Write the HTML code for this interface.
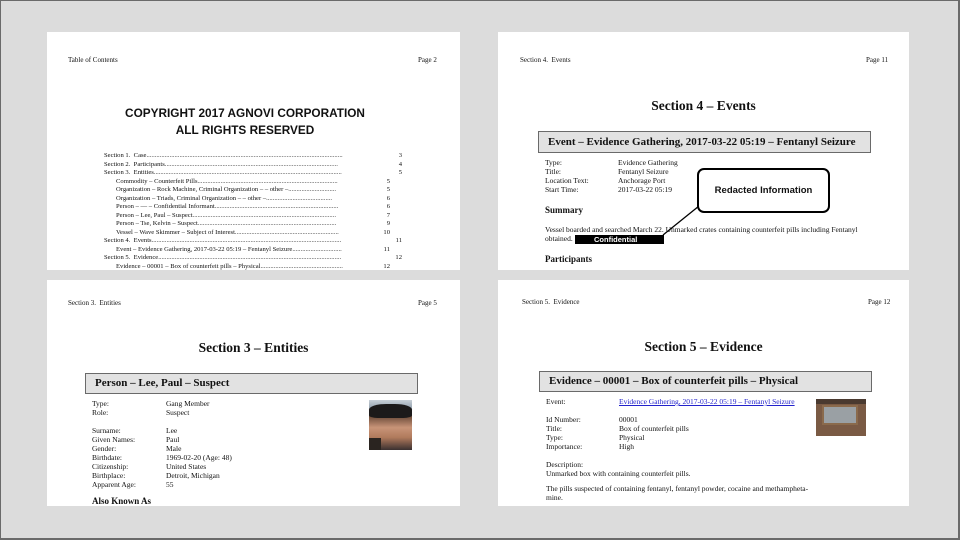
<!DOCTYPE html>
<html><head><meta charset="utf-8"><style>
*{margin:0;padding:0;box-sizing:border-box}
body{width:960px;height:540px;background:#dcdcdc;position:relative;overflow:hidden;font-family:"Liberation Serif",serif;color:#111}
.frame{position:absolute;left:0;top:0;width:960px;height:540px;border:1px solid #6a6a6a;border-right-width:2px;border-bottom-width:2px}
.pg{position:absolute;background:#fff;overflow:hidden}
.t{position:absolute;white-space:nowrap;line-height:10px}
.s{font-size:7px}
.f{font-size:7.5px}
.h{font-weight:bold;font-size:13.5px;line-height:16px}
.box{position:absolute;background:#e2e2e2;border:1px solid #6a6a6a;font-weight:bold;font-size:11px;line-height:19px;padding-left:9px;white-space:nowrap}
.toc{position:absolute;font-size:6.6px;line-height:8.5px;white-space:nowrap;overflow:hidden}
</style></head><body>
<div class="frame"></div>

<!-- TL -->
<div class="pg" style="left:47px;top:32px;width:413px;height:238px">
<div class="t s" style="left:21px;top:23px">Table of Contents</div>
<div class="t s" style="left:371px;top:23px">Page 2</div>
<div class="t" style="left:0;width:396px;text-align:center;top:73px;font-family:'Liberation Sans',sans-serif;font-weight:bold;font-size:11.8px;line-height:17px">COPYRIGHT 2017 AGNOVI CORPORATION<br>ALL RIGHTS RESERVED</div>
<div class="toc" style="left:57px;top:120px;width:298px">
<div>Section 1.&nbsp; Case.......................................................................................................................<span style="float:right">3</span></div>
<div>Section 2.&nbsp; Participants.........................................................................................................<span style="float:right">4</span></div>
<div>Section 3.&nbsp; Entities..................................................................................................................<span style="float:right">5</span></div>
<div style="padding-left:12px;width:286px">Commodity – Counterfeit Pills.....................................................................................<span style="float:right">5</span></div>
<div style="padding-left:12px;width:286px">Organization – Rock Machine, Criminal Organization – – other –.............................<span style="float:right">5</span></div>
<div style="padding-left:12px;width:286px">Organization – Triads, Criminal Organization – – other –........................................<span style="float:right">6</span></div>
<div style="padding-left:12px;width:286px">Person – — – Confidential Informant...........................................................................<span style="float:right">6</span></div>
<div style="padding-left:12px;width:286px">Person – Lee, Paul – Suspect.......................................................................................<span style="float:right">7</span></div>
<div style="padding-left:12px;width:286px">Person – Tse, Kelvin – Suspect....................................................................................<span style="float:right">9</span></div>
<div style="padding-left:12px;width:286px">Vessel – Wave Skimmer – Subject of Interest...............................................................<span style="float:right">10</span></div>
<div>Section 4.&nbsp; Events...................................................................................................................<span style="float:right">11</span></div>
<div style="padding-left:12px;width:286px">Event – Evidence Gathering, 2017-03-22 05:19 – Fentanyl Seizure..............................<span style="float:right">11</span></div>
<div>Section 5.&nbsp; Evidence...............................................................................................................<span style="float:right">12</span></div>
<div style="padding-left:12px;width:286px">Evidence – 00001 – Box of counterfeit pills – Physical..................................................<span style="float:right">12</span></div>
</div>
</div>

<!-- TR -->
<div class="pg" style="left:498px;top:32px;width:411px;height:238px">
<div class="t s" style="left:22px;top:23px">Section 4.&nbsp; Events</div>
<div class="t s" style="left:368px;top:23px">Page 11</div>
<div class="t h" style="left:0;width:411px;text-align:center;top:66px">Section 4 – Events</div>
<div class="box" style="left:40px;top:99px;width:333px;height:22px;line-height:20px">Event – Evidence Gathering, 2017-03-22 05:19 – Fentanyl Seizure</div>
<div class="t f" style="left:47px;top:126px;line-height:9px">Type:<br>Title:<br>Location Text:<br>Start Time:</div>
<div class="t f" style="left:120px;top:126px;line-height:9px">Evidence Gathering<br>Fentanyl Seizure<br>Anchorage Port<br>2017-03-22 05:19</div>
<div class="t" style="left:47px;top:173px;font-weight:bold;font-size:9px">Summary</div>
<div class="t f" style="left:47px;top:193px;line-height:9px">Vessel boarded and searched March 22. Unmarked crates containing counterfeit pills including Fentanyl<br>obtained.</div>
<div class="t" style="left:77px;top:203px;width:89px;height:9px;background:#000;color:#fff;font-family:'Liberation Sans',sans-serif;font-weight:bold;font-size:7.5px;line-height:9px;padding-left:19px">Confidential</div>
<svg style="position:absolute;left:0;top:0" width="411" height="238"><line x1="201" y1="174" x2="165" y2="203" stroke="#000" stroke-width="1.3"/></svg>
<div style="position:absolute;left:199px;top:136px;width:133px;height:45px;border:2px solid #000;border-radius:7px;background:#fff;font-family:'Liberation Sans',sans-serif;font-weight:bold;font-size:9.5px;line-height:41px;text-align:center">Redacted Information</div>
<div class="t" style="left:47px;top:222px;font-weight:bold;font-size:9px">Participants</div>
</div>

<!-- BL -->
<div class="pg" style="left:47px;top:280px;width:413px;height:226px">
<div class="t s" style="left:21px;top:18px">Section 3.&nbsp; Entities</div>
<div class="t s" style="left:371px;top:18px">Page 5</div>
<div class="t h" style="left:0;width:413px;text-align:center;top:60px">Section 3 – Entities</div>
<div class="box" style="left:38px;top:93px;width:333px;height:21px">Person – Lee, Paul – Suspect</div>
<div class="t f" style="left:45px;top:119px;line-height:9px">Type:<br>Role:<br><br>Surname:<br>Given Names:<br>Gender:<br>Birthdate:<br>Citizenship:<br>Birthplace:<br>Apparent Age:</div>
<div class="t f" style="left:119px;top:119px;line-height:9px">Gang Member<br>Suspect<br><br>Lee<br>Paul<br>Male<br>1969-02-20 (Age: 48)<br>United States<br>Detroit, Michigan<br>55</div>
<div style="position:absolute;left:322px;top:120px;width:43px;height:50px;background:linear-gradient(180deg,#c8d0d8 0%,#8a98a6 20%,#6a4a38 32%,#c89478 55%,#b07a5c 75%,#3a3030 100%)"><div style="position:absolute;left:0;top:4px;width:43px;height:14px;background:#1c1a1a;border-radius:40% 40% 20% 20%"></div><div style="position:absolute;left:0;top:38px;width:12px;height:12px;background:#2a2420"></div></div>
<div class="t" style="left:45px;top:216px;font-weight:bold;font-size:9px">Also Known As</div>
</div>

<!-- BR -->
<div class="pg" style="left:498px;top:280px;width:411px;height:226px">
<div class="t s" style="left:24px;top:17px">Section 5.&nbsp; Evidence</div>
<div class="t s" style="left:370px;top:17px">Page 12</div>
<div class="t h" style="left:0;width:411px;text-align:center;top:59px">Section 5 – Evidence</div>
<div class="box" style="left:41px;top:91px;width:333px;height:21px">Evidence – 00001 – Box of counterfeit pills – Physical</div>
<div class="t f" style="left:48px;top:117px;line-height:9px">Event:<br><br>Id Number:<br>Title:<br>Type:<br>Importance:</div>
<div class="t f" style="left:121px;top:117px;line-height:9px"><span style="color:#2222cc;text-decoration:underline">Evidence Gathering, 2017-03-22 05:19 – Fentanyl Seizure</span><br><br>00001<br>Box of counterfeit pills<br>Physical<br>High</div>
<div style="position:absolute;left:318px;top:119px;width:50px;height:37px;background:#7a5a44"><div style="position:absolute;left:6px;top:6px;width:36px;height:20px;background:#9aa0a4;border:2px solid #8a6a4c"></div><div style="position:absolute;left:0;top:0;width:50px;height:5px;background:#4a3a30"></div></div>
<div class="t f" style="left:48px;top:180px;line-height:9px">Description:<br>Unmarked box with containing counterfeit pills.</div>
<div class="t f" style="left:48px;top:204px;line-height:9px">The pills suspected of containing fentanyl, fentanyl powder, cocaine and methampheta-<br>mine.</div>
</div>
</body></html>
